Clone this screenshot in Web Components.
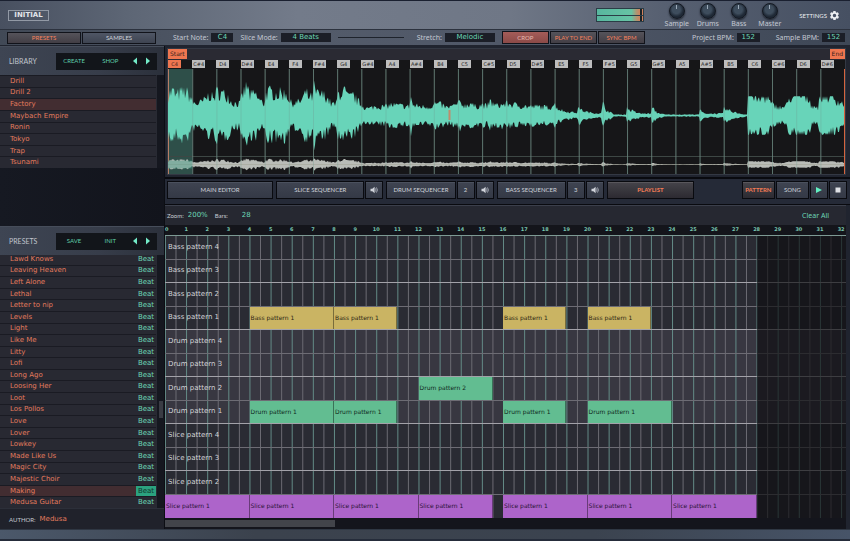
<!DOCTYPE html>
<html lang="en">
<head>
<meta charset="utf-8">
<title>Initial Slice</title>
<style>
html,body{margin:0;background:#15171f}
body{min-height:100vh;display:flex;flex-direction:column}
slice-app{flex:1}
</style>
</head>
<body>
<slice-app></slice-app>
<script>
const BASE = `
*{box-sizing:border-box}
:host{display:block;--coral:#e37b5d;--teal:#6cd6b6;--ui:Lato,"Open Sans",sans-serif;--txt:"DejaVu Sans","Noto Sans",sans-serif;--lab:"Noto Sans",sans-serif}
button,input,select{font:inherit;color:inherit;background:none;border:0;margin:0;padding:0;min-width:0;border-radius:0;outline:none;appearance:none}
ul{list-style:none;margin:0;padding:0}
svg{display:block}
`;
const define = (name, css, html, init) => customElements.define(name, class extends HTMLElement {
  constructor() {
    super();
    const root = this.attachShadow({mode: 'open'});
    const t = document.createElement('template');
    t.innerHTML = `<style>${BASE}${css}</style>${typeof html === 'function' ? html(this) : html}`;
    root.append(t.content.cloneNode(true));
    if (init) init.call(this, root);
  }
});

/* Framed push button */
define('push-button', `
:host{display:flex;border:1px solid #11131a;background:linear-gradient(#4f5665,#3e4451);font:6px/8px var(--ui);color:#cfd3da}
:host([tone=hot]){background:linear-gradient(#55535a,#423e45);color:#f5825d}
:host([tone=red]){background:linear-gradient(#a45c58,#8b4a48);color:#e6bab0}
:host([tone=view]){background:linear-gradient(#3f4451,#343946);border:1px solid #090a0f;box-shadow:inset 0 1px #4b515e}
:host([tone=active]){background:linear-gradient(#45444a,#2c2a31);border:1px solid #090a0f;box-shadow:inset 0 1px #59575c;color:#f57c56;font-weight:bold}
:host([tone=flat]){background:#12151a;border:0;color:#5fcfab}
button{flex:1;display:flex;align-items:center;justify-content:center;white-space:nowrap}
`, '<button type="button"><slot></slot></button>', function(root){
  const l = this.getAttribute('label'); if (l) root.querySelector('button').setAttribute('aria-label', l);
});

define('icon-glyph', `:host{display:block}svg{width:100%;height:100%}`, el => ({
  left: '<svg viewBox="0 0 8 8"><path d="M6 .5v7L2 4z" fill="#74ecc9"/></svg>',
  right: '<svg viewBox="0 0 8 8"><path d="M2 .5v7L6 4z" fill="#74ecc9"/></svg>',
  play: '<svg viewBox="0 0 8 8"><path d="M1 1v6l6-3z" fill="#62efc2"/></svg>',
  stop: '<svg viewBox="0 0 8 8"><path d="M1.500 1.500h5v5h-5z" fill="#dfe1e5"/></svg>',
  speaker: '<svg viewBox="0 0 8 8"><path d="M0.5 2.7h1.8L4.6.8v6.4L2.3 5.3H.5z" fill="#d0d3da"/><path d="M5.4 2.4q1.2 1.6 0 3.2M6.4 1.4q2.1 2.6 0 5.2" fill="none" stroke="#b5b9c3" stroke-width=".8"/></svg>',
  gear: '<svg viewBox="0 0 24 24"><path fill="#eceef1" fill-rule="evenodd" d="M19.4 13a7.6 7.6 0 0 0 0-2l2.1-1.6c.2-.2.3-.5.1-.7l-2-3.5c-.1-.2-.4-.3-.6-.2l-2.5 1a7 7 0 0 0-1.7-1l-.4-2.6a.5.5 0 0 0-.5-.4h-4a.5.5 0 0 0-.5.4L9 5a7 7 0 0 0-1.7 1L4.900 5c-.3-.1-.5 0-.7.200l-2 3.500c-.1.200 0 .5.200.7L4.500 11a7.600 7.600 0 0 0 0 2l-2.100 1.600c-.2.200-.3.500-.1.700l2 3.500c.1.200.4.300.6.200l2.500-1a7 7 0 0 0 1.700 1l.4 2.600c0 .2.200.4.500.4h4c.2 0 .5-.2.500-.4L15 19a7 7 0 0 0 1.700-1l2.500 1c.2.100.5 0 .6-.2l2-3.500c.1-.2.100-.5-.1-.7zM12 15.800a3.800 3.800 0 1 1 0-7.600 3.800 3.800 0 0 1 0 7.600z"/></svg>'
})[el.getAttribute('name')] || '');

define('level-knob', `
:host{display:block;width:31px}
label{display:flex;flex-direction:column;align-items:center;font:7px/9px var(--lab);color:#c3c8d2}
input{width:16px;height:16px;border-radius:50%;border:1px solid #141922;background:linear-gradient(#9dabba,#9dabba) 50% 1px/1px 4px no-repeat,radial-gradient(circle at 45% 40%,#3e4d5d 0 35%,#202a37 60%,#18202b);box-shadow:0 1px 2px #1c222c}
input::-webkit-slider-thumb{appearance:none;width:0;height:0}
`, '<label><input type="range"><slot></slot></label>');

define('app-header', `
:host{display:flex;align-items:center;height:30px;padding:0 10px 0 8px;border-top:1px solid #1a2030;border-bottom:1px solid #2c323e;background:linear-gradient(90deg,#485060,#5d6675 15%,#737b8a 35%,#6f7786 60%,#576071 78%,#465062)}
.logo{border:1px solid #9299a5;color:#e2e5ea;font:bold 7px/9px var(--txt);padding:0 3px;width:41px;text-align:center}
.meter{margin-left:auto;display:grid;gap:1px;width:48px;height:14px;padding:1px;background:#2b3d46;margin-right:17px}
.meter i{background:linear-gradient(90deg,#58b79f,#67c3a4 75%,#b09572 86%,#d2815c 94%,#1c2226 94%,#1c2226 97%,#d2815c 97%)}
.knobs{display:flex;margin-right:14px}
.settings{display:flex;align-items:center;gap:2px;font:6px/9px var(--ui);color:#eceef1}
icon-glyph{width:11px;height:11px}
`, `<div class="logo">INITIAL</div>
<div class="meter" role="img" aria-label="Output level"><i></i><i></i></div>
<div class="knobs"><level-knob>Sample</level-knob><level-knob>Drums</level-knob><level-knob>Bass</level-knob><level-knob>Master</level-knob></div>
<button class="settings" type="button">SETTINGS <icon-glyph name="gear"></icon-glyph></button>`);

define('control-bar', `
:host{display:flex;align-items:center;height:16px;padding:0 5px 0 7px;background:linear-gradient(90deg,#414956,#535b6a 35%,#4f5767 65%,#3e4756);border-bottom:1px solid #20242f;font:7px/9px var(--lab);color:#c3c8d2}
.tabs{display:flex;width:149px;gap:1px;margin-right:17px}
.tabs push-button{flex:1;height:12px}
label{display:flex;align-items:center;gap:3px;white-space:nowrap;margin-right:7px}
select,label input{height:9px;background:#1b1e27;color:var(--teal);text-align:center;text-align-last:center;font-family:var(--txt)}
.s{width:22px}.m{width:50px}
.line{width:66px;height:1px;background:#1e232c;margin-right:13px}
.line::-webkit-slider-thumb{appearance:none;width:0;height:0}
.acts{display:flex;gap:1px}
.acts push-button{width:47px;height:13px}
.bpm{display:flex;gap:16px;margin-left:auto}
.bpm label{margin:0}.bpm input{width:23px}
`, `<div class="tabs"><push-button tone="hot">PRESETS</push-button><push-button>SAMPLES</push-button></div>
<label>Start Note: <select class="s"><option>C4</option></select></label>
<label>Slice Mode: <select class="m"><option>4 Beats</option></select></label>
<input class="line" type="range" aria-label="Slice amount">
<label>Stretch: <select class="m"><option>Melodic</option></select></label>
<div class="acts"><push-button tone="red">CROP</push-button><push-button tone="hot">PLAY TO END</push-button><push-button tone="hot">SYNC BPM</push-button></div>
<div class="bpm"><label>Project BPM: <input value="152"></label><label>Sample BPM: <input value="152"></label></div>`);

define('panel-head', `
:host{display:flex;align-items:center;height:29px;padding:0 7px 0 9px;background:linear-gradient(90deg,#3e4553,#373d4a 60%,#2b303b);border-top:1px solid #464d5a;font:7px/9px var(--ui);color:#c0c5ce}
.box{margin-left:auto;display:flex;width:101px;height:17px;background:#12151a}
.box push-button{flex:38}
.box push-button.n{flex:14}
.box .e{margin-right:2px}
icon-glyph{width:8px;height:8px}
`, el => `<span><slot></slot></span><div class="box"><push-button tone="flat">${el.getAttribute('first')}</push-button><push-button tone="flat">${el.getAttribute('second')}</push-button><push-button class="n" tone="flat" label="Previous"><icon-glyph name="left"></icon-glyph></push-button><push-button class="n e" tone="flat" label="Next"><icon-glyph name="right"></icon-glyph></push-button></div>`);

define('name-list', `
:host{display:flex;overflow:hidden;background:#191b23}
ul{flex:1;display:grid;grid-auto-rows:1fr;align-self:flex-end}
li{display:flex;background:#282932;border-top:1px solid #1a1b23;color:var(--coral);font:7px/9px var(--txt)}
button{flex:1;text-align:left;padding-left:10px;white-space:nowrap}
b{font-weight:normal;color:var(--teal);width:20px;text-align:center;align-self:stretch;display:grid;place-items:center}
li.on{background:#422d31}
li.on b{background:#2ba27f;color:#12352c}
.bar{width:8px;background:#15171f;border-left:1px solid #282a33;display:flex;justify-content:center;align-items:flex-start}
.bar i{width:4px;height:17px;margin-top:146px;background:#3a3c44}
:host(:not([tag])) .bar i{display:none}
:host([tag]) ul{min-height:255px}
:host(:not([tag])) ul{min-height:93px}
`, el => {
  const tag = el.getAttribute('tag'), on = el.getAttribute('selected');
  return `<ul>${el.getAttribute('items').split('|').map(n => `<li${n === on ? ' class="on"' : ''}><button type="button">${n}</button>${tag ? `<b>${tag}</b>` : ''}</li>`).join('')}</ul><div class="bar"><i></i></div>`;
});

define('side-bar', `
:host{display:flex;flex-direction:column;background:linear-gradient(90deg,#161922,#12141c)}
.gap{flex:1;min-height:58px}
.presets{height:253px}
footer{display:flex;align-items:center;gap:4px;height:21px;padding-left:9px;background:#20222b;border-top:1px solid #2c2f39;font:6px/9px var(--ui);color:#c4c8d0}
footer span{font:7px/9px var(--txt);color:var(--coral)}
`, `<panel-head first="CREATE" second="SHOP">LIBRARY</panel-head>
<name-list items="Drill|Drill 2|Factory|Maybach Empire|Ronin|Tokyo|Trap|Tsunami" selected="Factory"></name-list>
<div class="gap"></div>
<panel-head first="SAVE" second="INIT">PRESETS</panel-head>
<name-list class="presets" tag="Beat" selected="Making" items="Lawd Knows|Leaving Heaven|Left Alone|Lethal|Letter to nip|Levels|Light|Like Me|Litty|Lofi|Long Ago|Loosing Her|Loot|Los Pollos|Love|Lover|Lowkey|Made Like Us|Magic City|Majestic Choir|Making|Medusa Guitar"></name-list>
<footer>AUTHOR: <span>Medusa</span></footer>`);

/* Amplitude envelope: time, level */
const ENV = [168,20,170,23,173,25,176,20,180,23,186,24,190,19,193,13,199,12,205,16,210,22,213,17,217,24,223,22,228,20,232,13,240,12,242,20,247,30,250,20,255,22,260,15,264,12,266,22,270,24,277,22,286,23,288,20,290,13,297,13,301,15,306,23,310,18,313,20,314,33,316,22,326,20,331,12,336,11,338,22,344,25,349,18,353,20,360,12,365,8,369,7,374,9,385,9,391,11,400,10,409,9,411,19,413,10,423,9,430,9,435,12,441,11,447,8,454,10,460,13,465,10,471,13,474,9,483,11,487,9,490,14,496,10,507,12,520,10,528,9,540,9,550,8,554,12,558,7,565,4,577,3,579,9,582,5,590,3,601,2,603,12,606,6,614,1,626,1,627,7,634,4,640,2,651,2,652,8,657,3,665,1,675,1,699,1,700,6,704,2,723,2,724,7,732,4,740,2,747,1,748,21,755,21,757,17,760,15,762,20,768,17,771,12,774,10,782,8,787,11,790,19,795,18,796,21,803,20,805,18,809,18,811,11,818,8,820,20,832,20,837,15,845,11];
function wavePath(cy, scale, cap) {
  let s = 7;
  const rnd = () => (s = (s * 16807) % 2147483647) / 2147483647;
  const up = [], down = [];
  let k = 0;
  for (let x = 168; x <= 844; x += 1) {
    while (ENV[k + 2] < x) k += 2;
    const f = (x - ENV[k]) / (ENV[k + 2] - ENV[k]);
    const a = (ENV[k + 1] + (ENV[k + 3] - ENV[k + 1]) * f) * scale;
    const top = x > 747 ? cap * .55 : cap;
    up.push(`${x},${(cy - Math.min(top, a * (.62 + .66 * rnd()))).toFixed(1)}`);
    down.unshift(`${x},${(cy + Math.min(top, a * (.6 + .66 * rnd()))).toFixed(1)}`);
  }
  return 'M' + up.concat(down).join('L') + 'Z';
}
const NOTES = ['C','C#','D','D#','E','F','F#','G','G#','A','A#','B'];

define('wave-view', `
:host{display:block;margin:2px 4px 2px 2px;padding:0;border:1px solid #333843;background:#2a2a33}
.flags{display:flex;justify-content:space-between;height:10px;margin-bottom:1px}
.flags span{background:#ee7650;color:#34201c;font:6px/9px var(--txt);padding:0 2px}
.stage{position:relative;background:#161618}
.keys{display:grid;grid-template-columns:repeat(28,1fr);height:9px}
.keys span{width:13px;height:8px;background:#bdbdbd;color:#222;font:5px/8px var(--txt);text-align:center}
.keys span:first-child{background:#ee7650;color:#40211b}
svg{width:100%;height:105px}
`, () => {
  const names = Array.from({length: 28}, (_, i) => NOTES[i % 12] + (4 + Math.floor(i / 12)));
  const lines = names.map((_, i) => `<path d="M${(168.5 + i * 24.16).toFixed(1)} 69V174" stroke="${i ? '#63756f' : '#d98a6c'}" stroke-width=".8"/>`).join('');
  return `<div class="flags"><span>Start</span><span>End</span></div>
<div class="stage"><div class="keys">${names.map(n => `<span>${n}</span>`).join('')}</div>
<svg viewBox="168 69 677 105" preserveAspectRatio="none" role="img" aria-label="Sample waveform">
<path d="M168 69h24.200v105H168z" fill="#2e4f49"/>
<path d="M168 156.500H845" stroke="#3d4744"/>${lines}
<path d="${wavePath(115.5, 1, 35)}" fill="#68d4b9"/>
<path d="${wavePath(164.5, .19, 6)}" fill="#b9bcb7"/>
<path d="M168 164.500H845" stroke="#a3a597" stroke-width=".6"/>
<path d="M168 160.500h24.200v8H168z" fill="#3f9c84" opacity=".45"/>
<path d="M${Array.from({length: 27}, (_, i) => (192.7 + i * 24.16).toFixed(1) + ' 69V174').join('M')}" stroke="#6f9c90" stroke-width=".8" opacity=".4"/>
<path d="M449.500 110v10" stroke="#c08b6c" stroke-width="2"/>
<path d="M844.500 69V174" stroke="#d5643e"/></svg></div>`;
});

define('view-tabs', `
:host{display:flex;gap:2px;height:28px;padding:2px 3px 5px 2px;background:#252a37;border-top:2px solid #090a0f;border-bottom:1px solid #090a0f}
.g{display:flex;gap:1px;margin-right:1px}
push-button{flex:1}
push-button.i{flex:none;width:18px}
icon-glyph{width:8px;height:8px}
`, `<div class="g" style="flex:107"><push-button tone="view">MAIN EDITOR</push-button></div>
<div class="g" style="flex:108"><push-button tone="view">SLICE SEQUENCER</push-button><push-button class="i" tone="view" label="Mute slices"><icon-glyph name="speaker"></icon-glyph></push-button></div>
<div class="g" style="flex:108"><push-button tone="view">DRUM SEQUENCER</push-button><push-button class="i" tone="view">2</push-button><push-button class="i" tone="view" label="Mute drums"><icon-glyph name="speaker"></icon-glyph></push-button></div>
<div class="g" style="flex:108"><push-button tone="view">BASS SEQUENCER</push-button><push-button class="i" tone="view">3</push-button><push-button class="i" tone="view" label="Mute bass"><icon-glyph name="speaker"></icon-glyph></push-button></div>
<div class="g" style="flex:88"><push-button tone="active">PLAYLIST</push-button></div>
<div style="flex:43"></div>
<div class="g" style="flex:106;margin:0"><push-button tone="active">PATTERN</push-button><push-button tone="view">SONG</push-button><push-button class="i" tone="view" label="Play"><icon-glyph name="play"></icon-glyph></push-button><push-button class="i" tone="view" label="Stop"><icon-glyph name="stop"></icon-glyph></push-button></div>`);

/* Clips: row -> [start, end] in bars */
const CLIPS = {
  'Bass pattern 1': [[4,8],[8,11],[16,19],[20,23]],
  'Drum pattern 2': [[12,15.5]],
  'Drum pattern 1': [[4,8],[8,11],[16,19],[20,24]],
  'Slice pattern 1': [[0,4],[4,8],[8,12],[12,15.5],[16,20],[20,24],[24,28]]
};
define('play-list', `
:host{display:flex;flex-direction:column;margin-right:4px;background:#14151c}
.tools{display:flex;align-items:center;gap:2px;height:20px;padding:0 17px 0 2px;background:#262831;border-top:1px solid #3b3f4b;font:6px/9px var(--ui);color:#c8ccd3}
.tools label{display:flex;align-items:center;gap:4px}
.tools input{font:7px/9px var(--txt);color:var(--teal)}
.tools button{margin-left:auto;color:var(--teal);font:7px/9px var(--lab)}
.ruler,.row{display:grid;grid-template-columns:repeat(64,50fr) 23fr}
.ruler{height:10px;background:#14151b}
.ruler span{width:0;display:flex;justify-content:center;font:bold 5px/9px var(--txt);color:#77c3ae;grid-row:1}
.ruler span:first-child{justify-content:flex-start}
.grid{flex:1;position:relative;display:grid;grid-auto-rows:1fr;min-height:282px;border-top:1px solid #7d9a94}
.lanes{position:absolute;inset:0}
.lanes svg{width:100%;height:100%}
.row{position:relative;border-bottom:1px solid #6d6c74}
.row.major{border-bottom-color:#a3a2a9}
.row.s1{border:0}
.row h4{grid-area:1/1/2/8;margin:0;padding-left:3px;align-self:center;font:7px/9px var(--txt);color:#d2d3d8;white-space:nowrap}
.clip{grid-row:1;display:flex;align-items:center;text-align:left;font:6px/8px var(--txt);padding-left:1px;white-space:nowrap;overflow:hidden;border-right:1px solid #0006}
.B{background:#cab463;color:#2d2614}.D{background:#62bd91;color:#10291e}.S{background:#ad64ca;color:#2b1236}
.scroll{height:11px;padding-top:2px}
.scroll i{display:block;width:25%;height:7px;background:#42444a}
.out{position:absolute;inset:0 0 0 auto;width:13.140%;background:#0e0e10;opacity:.68}
`, () => {
  const total = 64 * 50 + 23;
  let lines = '';
  for (let i = 0; i <= 64; i++) lines += `<path d="M${i * 50 + 2} 0V282" vector-effect="non-scaling-stroke" stroke="${i % 2 ? '#6c6b73' : '#648b87'}"/>`;
  const rows = ['Bass','Drum','Slice'].flatMap(g => [4,3,2,1].map(n => {
    const name = `${g} pattern ${n}`;
    const last = g === 'Slice' && n === 1;
    const clips = (CLIPS[name] || []).map(([a, b]) => `<button type="button" class="clip ${g[0]}" style="grid-column:${a * 2 + 1}/${b * 2 + 1}">${name}</button>`).join('');
    return `<div class="row${n % 2 ? ' major' : ''}${last ? ' s1' : ''}">${last ? '' : `<h4>${name}</h4>`}${clips}</div>`;
  })).join('');
  const nums = Array.from({length: 33}, (_, i) => `<span style="grid-column:${i * 2 + 1}">${i}</span>`).join('');
  return `<div class="tools"><label>Zoom: <input value="200%" style="width:25px"></label><label>Bars: <input value="28" style="width:24px;padding-left:10px"></label><button type="button">Clear All</button></div>
<div class="ruler">${nums}</div>
<div class="grid"><div class="lanes"><svg viewBox="0 0 ${total} 282" preserveAspectRatio="none" aria-hidden="true"><path d="M0 0H${total}V282H0z" fill="#2a2b33"/><path d="M0 94H${total}V188H0z" fill="#383741"/>${lines}</svg></div>${rows}<div class="out"></div></div>
<div class="scroll"><i></i></div>`;
});

define('slice-app', `
:host{display:flex;flex-direction:column}
.body{flex:1;display:grid;grid-template-columns:164px minmax(0,1fr)}
main{display:flex;flex-direction:column;background:#20242f;border-left:1px solid #0c0e14}
play-list{flex:1}
side-bar{min-height:0}
.foot{height:12px;background:linear-gradient(90deg,#4b586a,#3b424d 30%,#3b434f 70%,#475468);border-top:1px solid #2f3743;border-bottom:2px solid #252c3a}
`, `<app-header></app-header><control-bar></control-bar>
<div class="body"><side-bar></side-bar><main><wave-view></wave-view><view-tabs></view-tabs><play-list></play-list></main></div>
<div class="foot"></div>`);
</script>
</body>
</html>
